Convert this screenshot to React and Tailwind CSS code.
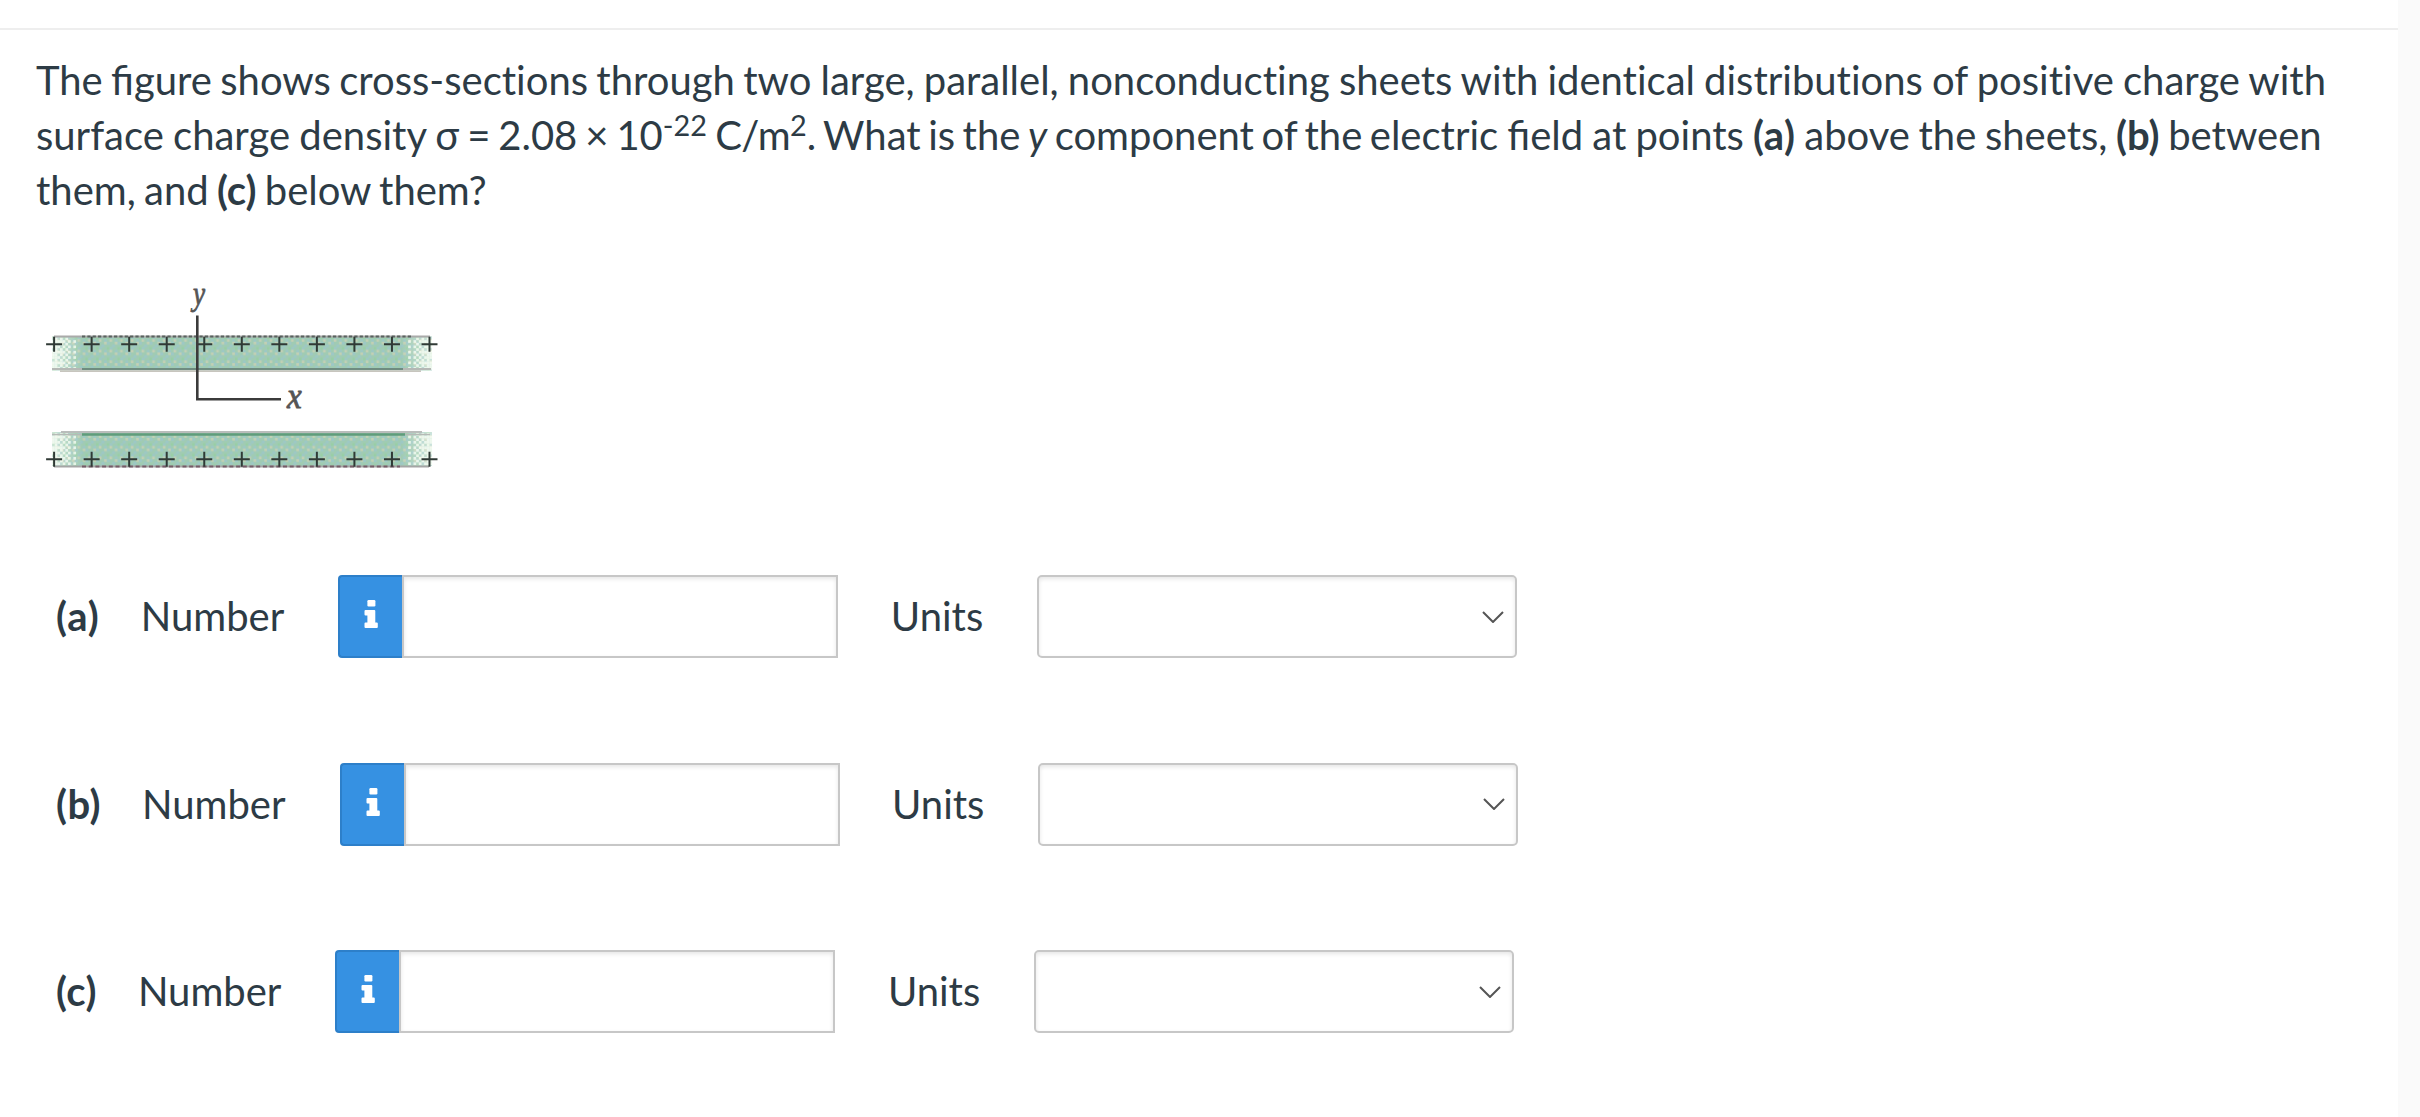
const PARTS = [
  { key: 'a', tracking: 'tracking-[1px]' },
  { key: 'b', tracking: 'tracking-[0.5px]' },
  { key: 'c', tracking: 'tracking-[0.5px]' },
]

const PLUS_X = Array.from({ length: 11 }, (_, i) => 54.1 + i * 37.54)

// 4x4 ordered dither thresholds, used to fade the ends of each sheet
const BAYER = [
  [0, 8, 2, 10],
  [12, 4, 14, 6],
  [3, 11, 1, 9],
  [15, 7, 13, 5],
]
const CELL = 2.67

function fadeDots(top, height) {
  const dots = []
  const cols = 13
  const rows = Math.floor(height / CELL)
  for (let r = 0; r < rows; r++) {
    for (let c = 0; c < cols; c++) {
      const level = (BAYER[r % 4][c % 4] + 0.5) / 16
      if (level > 0.1 + (c + 0.5) / cols) {
        dots.push({ x: 52 + c * CELL, y: top + r * CELL })
        dots.push({ x: 429.5 - c * CELL, y: top + r * CELL })
      }
    }
  }
  return dots
}

function Sheet({ top, plusY, flipped }) {
  return (
    <g>
      <rect x="52" y={top} width="380" height="34" fill="url(#grain)" />
      {fadeDots(top + 1, 33).map((d, i) => (
        <rect key={i} x={d.x} y={d.y} width="2.7" height="2.7" fill="#f8fff4" fillOpacity="0.75" />
      ))}
      <rect x="52" y={top} width="380" height="34" fill="url(#ends)" />
      {flipped ? (
        <>
          <path d={`M61 ${top}H422`} stroke="#b9bdbb" strokeWidth="2" />
          <path d={`M52 ${top + 2.5}H430`} stroke="#b5bab6" strokeWidth="1.5" />
          <path d={`M82 ${top + 2.5}H405`} stroke="#5f9c7b" strokeWidth="2.4" />
          <path d={`M54 ${top + 34.5}H429`} stroke="#a5a5a5" strokeWidth="1.8" />
          <path d={`M82 ${top + 34.5}H400`} stroke="#765c68" strokeWidth="1.8" strokeDasharray="4 2.7" />
        </>
      ) : (
        <>
          <path d={`M54 ${top}H430`} stroke="#aaa" strokeWidth="1.8" />
          <path d={`M82 ${top}H413`} stroke="#59625e" strokeWidth="2" strokeDasharray="3.2 2.14" />
          <path d={`M52 ${top + 32.5}H431`} stroke="#b5b8b5" strokeWidth="1.8" />
          <path d={`M82 ${top + 32.5}H403`} stroke="#6f8c80" strokeWidth="2" />
          <path d={`M60 ${top + 34.7}H421`} stroke="#c7c5be" strokeWidth="1.8" />
        </>
      )}
      {PLUS_X.map(x => (
        <path key={x} d={`M${x - 8} ${plusY}h16M${x} ${plusY - 7.5}v15`} stroke="#303a36" strokeWidth="2" />
      ))}
    </g>
  )
}

function SheetsFigure() {
  return (
    <svg className="ml-9 block h-[220px] w-[410px]" viewBox="36 260 410 220" fill="none">
      <defs>
        <pattern id="grain" width="10.68" height="10.68" patternUnits="userSpaceOnUse">
          <rect width="10.68" height="10.68" fill="#a0cbb3" />
          <path d="M0 0h3v3h-3zM5.3 2.7h3v3h-3zM2.7 5.3h3v3h-3zM8 8h2.7v2.7h-2.7z" fill="#9dc8c5" />
          <path d="M8 0h2.6v2.6h-2.6zM2.7 8h2.6v2.6h-2.6z" fill="#c3d0b4" />
          <path d="M0 5.3h2.5v2.5h-2.5z" fill="#98cfa5" />
        </pattern>
        <linearGradient id="ends">
          <stop offset="0" stopColor="#fbfff8" stopOpacity="0.5" />
          <stop offset="0.08" stopColor="#fbfff8" stopOpacity="0" />
          <stop offset="0.92" stopColor="#fbfff8" stopOpacity="0" />
          <stop offset="1" stopColor="#fbfff8" stopOpacity="0.5" />
        </linearGradient>
      </defs>
      <Sheet top={336.5} plusY={344.3} />
      <Sheet top={432} plusY={459.3} flipped />
      <path d="M197.3 315.5V399.2H281" stroke="#3b3b3b" strokeWidth="2.6" />
      <g fontStyle="italic" fontFamily="Liberation Serif, serif" fill="#555" stroke="#555" strokeWidth="0.8">
        <text transform="translate(193 305) scale(0.8 1)" fontSize="34">y</text>
        <text transform="translate(287 407.8) scale(0.95 1)" fontSize="35">x</text>
      </g>
    </svg>
  )
}

function InfoIcon() {
  return (
    <svg className="mb-[5px] block h-7 w-[14px]" viewBox="0 0 14 28" fill="#fff">
      <rect x="3.4" y="0" width="8" height="6.4" rx="1.2" />
      <path d="M1.5 10H10.3Q11.3 10 11.3 11V22.6H12.8Q13.8 22.6 13.8 23.6V27Q13.8 28 12.8 28H1.5Q.5 28 .5 27V23.6Q.5 22.6 1.5 22.6H3.4V15.4H1.5Q.5 15.4 .5 14.4V11Q.5 10 1.5 10Z" />
    </svg>
  )
}

function AnswerRow({ part }) {
  return (
    <div className="flex h-[83px] items-center whitespace-nowrap">
      <span className={`font-bold ${part.tracking}`}>({part.key})</span>
      <span className="ml-[41px]">Number</span>
      <div className="ml-[54px] flex h-[83px] w-[500px]">
        <button className="flex w-16 shrink-0 items-center justify-center rounded-l-[4px] border-2 border-r-0 border-[#2d7fc9] bg-[#3691e2]">
          <InfoIcon />
        </button>
        <input className="min-w-0 flex-1 border-2 border-[#c7c7c7] bg-white shadow-[inset_0_2px_4px_rgba(0,0,0,0.1)] outline-none" />
      </div>
      <span className="ml-[52.5px]">Units</span>
      <div className="ml-[53.5px] flex h-[83px] w-[480px] items-center justify-end rounded-[5px] border-2 border-[#c7c7c7] bg-white pr-[11px] shadow-[inset_0_2px_4px_rgba(0,0,0,0.1)]">
        <svg className="h-3 w-[22px]" viewBox="0 0 22 12" fill="none">
          <path d="M1 1L11 11L21 1" stroke="#555" strokeWidth="2" />
        </svg>
      </div>
    </div>
  )
}

// Lato joins "ti" as well as "fi"; only the latter is wanted
const Fi = () => <span className="[font-variant-ligatures:common-ligatures]">fi</span>

export default function App() {
  return (
    <div className="flex h-[1117px] w-[2420px] overflow-hidden bg-white font-[Lato,sans-serif] text-[40px] leading-[55px] text-[#2d3b45]">
      <main className="flex-1">
        <div className="h-[30px] border-b-2 border-[#eee]" />
        <p className="mt-[23px] h-[166px] whitespace-nowrap pl-9 [font-variant-ligatures:no-common-ligatures] [word-spacing:-1.1px]">
          <span className="[word-spacing:-1.9px]">The <Fi />gure shows cross-sections through </span>
          two large, parallel, nonconducting sheets with identical distributions of positive charge with
          <br />
          <span className="[word-spacing:-1px]">surface charge density </span>
          <span className="[word-spacing:-2.3px]">σ = 2.08 × 10</span>
          <sup className="text-[72%]">-22</sup>
          <span className="[word-spacing:-2px]"> <span className="tracking-[-0.6px]">C/m</span></span>
          <sup className="text-[72%]">2</sup>
          <span className="[word-spacing:-2.7px]">. What is the <i>y</i> component of the </span>
          electric <Fi />eld at points <b className="tracking-[0.6px]">(a)</b>
          <span className="[word-spacing:-1.6px]"> above the sheets, <b>(b)</b> between</span>
          <br />
          <span className="[word-spacing:-1.9px]">them, and <b>(c)</b> below them?</span>
        </p>
        <div className="mt-[41px]">
          <SheetsFigure />
        </div>
        <div className="mt-[95px] flex flex-col gap-[104.5px] pl-14">
          {PARTS.map(p => <AnswerRow key={p.key} part={p} />)}
        </div>
      </main>
      <aside className="w-[22px] bg-[#fafafa]" />
    </div>
  )
}
